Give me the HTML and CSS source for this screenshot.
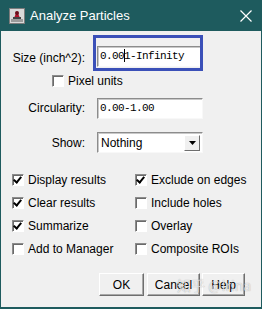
FILE: index.html
```html
<!DOCTYPE html>
<html lang="en">
<head>
    <meta charset="UTF-8">
    <title>Analyze Particles</title>
    <link rel="stylesheet" href="styles.css">
</head>
<body>
    <div class="window">
        <div class="titlebar">
            <svg class="app-icon" width="16" height="16" viewBox="0 0 16 16">
                <rect x="0.5" y="0.5" width="15" height="15" fill="#d9d9d9" stroke="#7c7c7c"/>
                <rect x="2" y="11" width="12" height="3" fill="#9a9a9a"/>
                <path d="M5 10 L8 3 L11 10 Z" fill="#b0122a"/>
                <circle cx="8" cy="5" r="2" fill="#6b0d1a"/>
                <rect x="4" y="9" width="8" height="2" fill="#444"/>
            </svg>
            <span class="title">Analyze Particles</span>
            <svg class="close" width="12" height="12" viewBox="0 0 12 12">
                <path d="M0.5 0.5 L11.5 11.5 M11.5 0.5 L0.5 11.5" stroke="#fff" stroke-width="1.2"/>
            </svg>
        </div>

        <div class="client">
            <div class="row row-size">
                <label class="lbl">Size (inch^2):</label>
                <div class="field mono">0.00<span class="caret"></span>1-Infinity</div>
                <div class="mark"></div>
            </div>

            <div class="row row-pixel">
                <span class="cb"></span>
                <span>Pixel units</span>
            </div>

            <div class="row row-circ">
                <label class="lbl">Circularity:</label>
                <div class="field mono">0.00-1.00</div>
            </div>

            <div class="row row-show">
                <label class="lbl">Show:</label>
                <div class="select">
                    <span class="select-text">Nothing</span>
                    <span class="arrow"><svg width="7" height="4" viewBox="0 0 7 4"><path d="M0 0 H7 L3.5 4 Z" fill="#000"/></svg></span>
                </div>
            </div>

            <div class="options">
                <div class="opt"><span class="cb on"></span>Display results</div>
                <div class="opt"><span class="cb on"></span>Exclude on edges</div>
                <div class="opt"><span class="cb on"></span>Clear results</div>
                <div class="opt"><span class="cb"></span>Include holes</div>
                <div class="opt"><span class="cb on"></span>Summarize</div>
                <div class="opt"><span class="cb"></span>Overlay</div>
                <div class="opt"><span class="cb"></span>Add to Manager</div>
                <div class="opt"><span class="cb"></span>Composite ROIs</div>
            </div>

            <div class="buttons">
                <button class="btn btn-ok">OK</button>
                <button class="btn btn-cancel">Cancel</button>
                <button class="btn btn-help">Help</button>
                <span class="watermark">知乎 @Irina</span>
            </div>
        </div>
    </div>
</body>
</html>
```

FILE: styles.css
```css
body {
    margin: 0;
    font-family: "Liberation Sans", Arial, sans-serif;
    font-size: 12px;
    color: #000;
}

.window {
    width: 262px;
    height: 309px;
    background-color: #1e5b5e;
    display: flex;
    flex-direction: column;
}

/* Title bar */
.titlebar {
    height: 31px;
    display: flex;
    align-items: center;
    padding-left: 9px;
    flex-shrink: 0;
}

.app-icon {
    margin-top: 1px;
}

.title {
    color: #fff;
    font-size: 13px;
    margin-left: 5px;
    flex: 1;
}

.close {
    margin-right: 10px;
}

.client {
    flex: 1;
    margin: 0 1px 2px;
    background-color: #f0f0f0;
}

/* Label + field rows */
.row {
    display: flex;
    align-items: center;
    position: relative;
}

.lbl {
    width: 84px;
    text-align: right;
    margin-right: 12px;
}

.row-size {
    margin-top: 12px;
    height: 26px;
}

.row-size .lbl {
    margin-top: 3px;
}

.row-pixel {
    height: 23px;
    padding-left: 51px;
}

.row-circ {
    margin-top: 4px;
    height: 24px;
}

.row-show {
    margin-top: 10px;
    height: 25px;
}

.row-show .lbl {
    margin-top: 1px;
}

.field {
    width: 106px;
    height: 21px;
    box-sizing: border-box;
    background-color: #fff;
    border: 1px solid;
    border-color: #8c8c8c #f8f8f8 #f8f8f8 #8c8c8c;
    box-shadow: inset 1px 1px 0 #c8c8c8;
    padding: 2px 0 0 2px;
}

.mono {
    font-family: "Liberation Mono", "DejaVu Sans Mono", monospace;
    font-size: 11px;
    letter-spacing: -0.6px;
    line-height: 14px;
}

.caret {
    display: inline-block;
    width: 1px;
    height: 13px;
    background-color: #000;
    vertical-align: -3px;
    margin-right: -1px;
}

/* blue annotation frame drawn over the size field */
.mark {
    position: absolute;
    left: 92px;
    top: -8px;
    width: 110px;
    height: 36px;
    box-sizing: border-box;
    border: 3px solid #3b50b8;
}

.select {
    width: 106px;
    height: 21px;
    box-sizing: border-box;
    background-color: #fff;
    border: 1px solid;
    border-color: #8c8c8c #f8f8f8 #f8f8f8 #8c8c8c;
    box-shadow: inset 1px 1px 0 #c8c8c8;
    display: flex;
    align-items: center;
    padding: 1px 2px 1px 3px;
}

.select-text {
    flex: 1;
    font-size: 12px;
}

.arrow {
    width: 16px;
    height: 16px;
    box-sizing: border-box;
    background-color: #f0f0f0;
    border: 1px solid;
    border-color: #fff #6e6e6e #6e6e6e #fff;
    display: flex;
    align-items: center;
    justify-content: center;
}

/* Checkboxes */
.cb {
    width: 12px;
    height: 12px;
    box-sizing: border-box;
    background-color: #fff;
    border: 1px solid;
    border-color: #8c8c8c #fff #fff #8c8c8c;
    box-shadow: inset 1px 1px 0 #6a6a6a;
    margin-right: 4px;
    flex-shrink: 0;
    display: inline-block;
    position: relative;
}

.cb.on::after {
    content: "";
    position: absolute;
    left: 2px;
    top: 0px;
    width: 3px;
    height: 6px;
    border: solid #000;
    border-width: 0 2px 2px 0;
    transform: rotate(40deg);
}

.options {
    display: grid;
    grid-template-columns: 123px 1fr;
    grid-auto-rows: 23px;
    margin-top: 13px;
    padding-left: 11px;
}

.opt {
    display: flex;
    align-items: center;
}

/* Buttons */
.buttons {
    display: flex;
    margin-top: 13px;
    padding-left: 98px;
    position: relative;
}

.btn {
    height: 23px;
    box-sizing: border-box;
    font-family: "Liberation Sans", Arial, sans-serif;
    font-size: 12px;
    color: #000;
    background-color: #f0f0f0;
    border: 1px solid;
    border-color: #fff #6e6e6e #6e6e6e #fff;
    box-shadow: inset -1px -1px 0 #a8a8a8;
    padding: 0;
}

.btn-ok {
    width: 45px;
}

.btn-cancel {
    width: 53px;
    margin-left: 3px;
}

.btn-help {
    width: 43px;
    margin-left: 2px;
}

.watermark {
    position: absolute;
    left: 176px;
    top: 2px;
    font-family: "Noto Sans CJK SC", sans-serif;
    font-size: 14px;
    color: rgba(255, 255, 255, 0.7);
    text-shadow: 0 0 1px rgba(0, 0, 0, 0.35);
    white-space: nowrap;
}
```
